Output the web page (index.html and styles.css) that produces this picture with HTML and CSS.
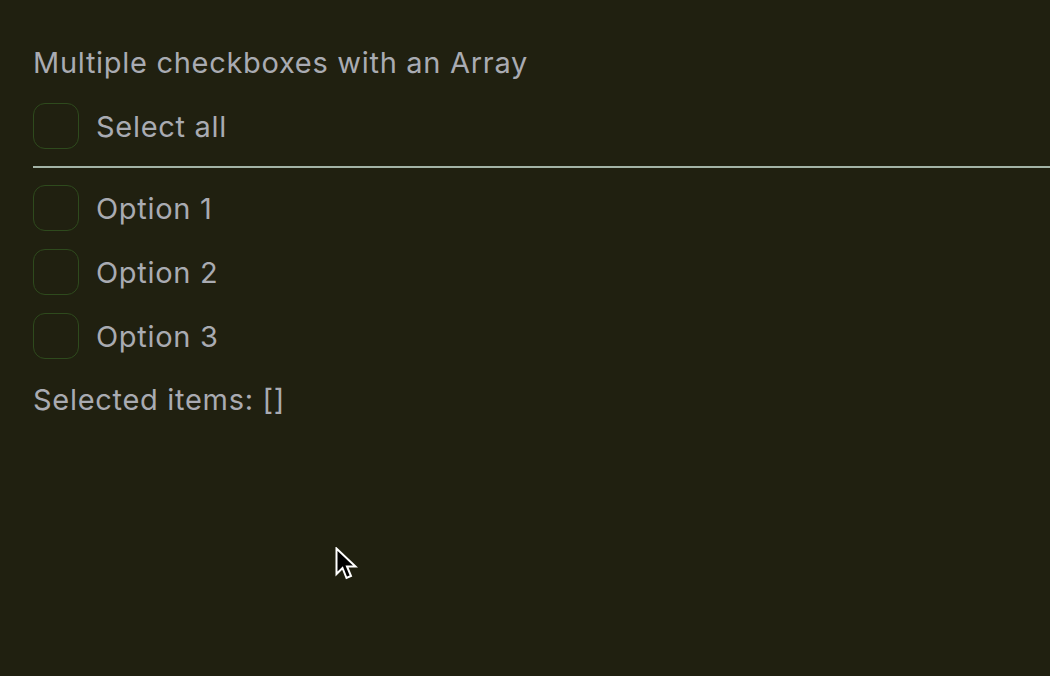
FILE: index.html
```html
<!doctype html>
<html lang="en">
<head>
    <meta charset="utf-8">
    <title>Multiple checkboxes</title>
    <link rel="stylesheet" href="styles.css">
</head>
<body>

<div class="demo">
    <p class="title">Multiple checkboxes with an Array</p>

    <label class="check"><input type="checkbox" class="box js-all"/> Select all</label>
    <hr class="divider"/>

    <div class="options">
        <label class="check"><input type="checkbox" class="box js-item" value="Option 1"/> Option 1</label>
        <label class="check"><input type="checkbox" class="box js-item" value="Option 2"/> Option 2</label>
        <label class="check"><input type="checkbox" class="box js-item" value="Option 3"/> Option 3</label>
    </div>

    <p class="result">Selected items: <span class="js-result">[]</span></p>
</div>

<svg class="pointer" width="24" height="36" viewBox="0 0 24 36">
    <path d="M1.5 1.5 L1.5 27 L7.5 21 L11.5 31 L16 29 L12 19.5 L20.5 19.5 Z" fill="#000" stroke="#fff" stroke-width="2" stroke-linejoin="miter"/>
</svg>

<script>
    var all = document.querySelector('.js-all');
    var items = [].slice.call(document.querySelectorAll('.js-item'));
    var result = document.querySelector('.js-result');

    function update() {
        var picked = items.filter(function(i) { return i.checked; }).map(function(i) { return i.value; });
        result.textContent = JSON.stringify(picked);
        all.checked = picked.length === items.length;
    }

    all.addEventListener('change', function() {
        items.forEach(function(i) { i.checked = all.checked; });
        update();
    });
    items.forEach(function(i) { i.addEventListener('change', update); });
</script>

</body>
</html>
```

FILE: styles.css
```css
html, body {
    margin: 0;
    padding: 0;
    height: 100%;
    background: #202010;
    color: #a9abb2;
    font-family: Inter, "Noto Sans", sans-serif;
    font-size: 29px;
    letter-spacing: 0.7px;
}

.demo {
    padding: 43px 0 0 33px;
}

.title {
    margin: 0;
    line-height: 40px;
}

.check {
    display: flex;
    align-items: center;
    gap: 17px;
    height: 46px;
    cursor: pointer;
}
    .title + .check {
        margin-top: 20px;
    }

.box {
    appearance: none;
    -webkit-appearance: none;
    margin: 0;
    width: 46px;
    height: 46px;
    border: 1.5px solid #2e4a1d;
    border-radius: 12px;
    background: transparent;
    cursor: pointer;
}
    .box:checked {
        background: #4a7a2a;
    }

.divider {
    margin: 17px 0;
    border: 0;
    height: 2px;
    background: #a3b3a6;
}

.options {
    display: flex;
    flex-direction: column;
    gap: 18px;
}

.result {
    margin: 21px 0 0;
    line-height: 40px;
}

.pointer {
    position: absolute;
    left: 335px;
    top: 547px;
}
```
